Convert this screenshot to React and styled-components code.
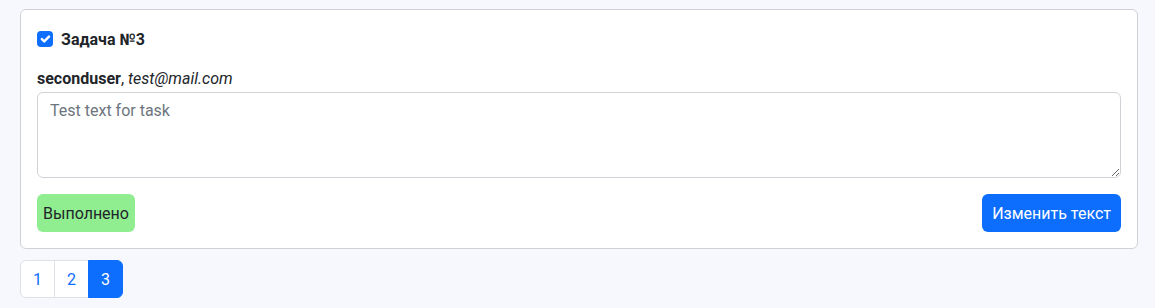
import React from "react";
import styled, { createGlobalStyle } from "styled-components";

const GlobalStyle = createGlobalStyle`
  body {
    margin: 0;
    background: #f7f8fd;
    font-family: Roboto, "Noto Sans", "Liberation Sans", sans-serif;
    font-size: 16px;
    color: #212529;
  }
`;

const Page = styled.div`
  padding: 9px 17px 0 20px;
`;

const Card = styled.div`
  background: #fff;
  border: 1px solid #cfd1d4;
  border-radius: 6px;
  padding: 16px;
  display: flex;
  flex-direction: column;
`;

const TitleRow = styled.label`
  display: flex;
  align-items: center;
  gap: 8px;
  height: 26px;
  font-weight: 700;
  font-size: 16px;
`;

const Check = styled.span`
  width: 16px;
  height: 16px;
  border-radius: 4px;
  background: #0d6efd;
  display: flex;
  align-items: center;
  justify-content: center;
`;

const Author = styled.div`
  margin-top: 15px;
  line-height: 24px;
  height: 24px;
  b { font-weight: 700; }
  i { font-style: italic; }
`;

const TextArea = styled.textarea`
  display: block;
  box-sizing: border-box;
  width: 100%;
  height: 86px;
  margin: 1px 0 0;
  padding: 6px 12px;
  border: 1px solid #cfd3d7;
  border-radius: 6px;
  font: inherit;
  line-height: 24px;
  color: #212529;
  resize: vertical;
  outline: none;
  &::placeholder { color: #6c757d; }
`;

const Actions = styled.div`
  display: flex;
  justify-content: space-between;
  margin-top: 16px;
`;

const Button = styled.button`
  height: 38px;
  padding: 0 ${(p) => (p.$done ? "6px" : "10px")};
  border: none;
  border-radius: 6px;
  font: inherit;
  background: ${(p) => (p.$done ? "#90ee90" : "#0d6efd")};
  color: ${(p) => (p.$done ? "#212529" : "#fff")};
  cursor: pointer;
`;

const Pagination = styled.ul`
  display: flex;
  list-style: none;
  margin: 11px 0 0;
  padding: 0;
`;

const PageItem = styled.li`
  box-sizing: border-box;
  height: 38px;
  padding: 0 12px;
  display: flex;
  align-items: center;
  color: ${(p) => (p.$active ? "#fff" : "#0d6efd")};
  background: ${(p) => (p.$active ? "#0d6efd" : "#fff")};
  border: 1px solid ${(p) => (p.$active ? "#0d6efd" : "#dee2e6")};
  margin-left: -1px;
  &:first-child { margin-left: 0; border-radius: 6px 0 0 6px; }
  &:last-child { border-radius: 0 6px 6px 0; }
`;

export default function App() {
  return (
    <Page>
      <GlobalStyle />
      <Card>
        <TitleRow>
          <Check>
            <svg width="16" height="16" viewBox="0 0 20 20">
              <path d="M6 10l3 3 6-6" fill="none" stroke="#fff" strokeWidth="3" strokeLinecap="round" strokeLinejoin="round" />
            </svg>
          </Check>
          Задача №3
        </TitleRow>
        <Author>
          <b>seconduser</b>, <i>test@mail.com</i>
        </Author>
        <TextArea placeholder="Test text for task" />
        <Actions>
          <Button $done>Выполнено</Button>
          <Button>Изменить текст</Button>
        </Actions>
      </Card>
      <Pagination>
        <PageItem>1</PageItem>
        <PageItem>2</PageItem>
        <PageItem $active>3</PageItem>
      </Pagination>
    </Page>
  );
}
